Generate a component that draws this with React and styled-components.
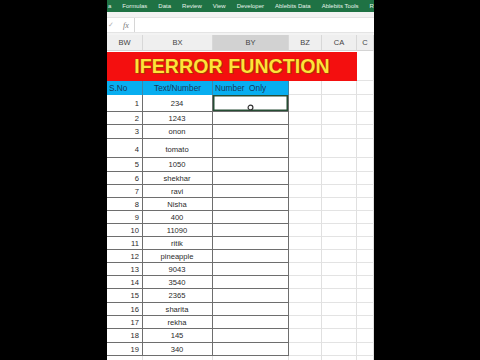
import React from 'react';
import styled, { createGlobalStyle } from 'styled-components';

const Global = createGlobalStyle`
  html, body { margin: 0; padding: 0; background: #000; }
  body { font-family: "Liberation Sans", Arial, sans-serif; }
  * { box-sizing: border-box; }
`;

const Stage = styled.div`
  width: 480px;
  height: 360px;
  background: #000;
  display: flex;
  padding-left: 107px;
`;

const Frame = styled.div`
  width: 267px;
  height: 360px;
  overflow: hidden;
  background: #fff;
  display: flex;
  flex-direction: column;
`;

const Ribbon = styled.div`
  height: 12px;
  flex: none;
  background: #1f7244;
  display: flex;
  align-items: center;
  gap: 11px;
  padding-left: 1px;
  color: #e8f3ec;
  font-size: 6px;
  white-space: nowrap;
`;

const Tab = styled.span`
  flex: none;
`;

const FormulaArea = styled.div`
  height: 23px;
  flex: none;
  background: #f3f3f3;
  padding: 5px 0 2px 0;
  display: flex;
`;

const FormulaBox = styled.div`
  flex: 1;
  background: #fff;
  display: flex;
  align-items: center;
  border-top: 1px solid #e4e4e4;
  border-bottom: 1px solid #e4e4e4;
`;

const Check = styled.span`
  width: 12px;
  padding-left: 1px;
  color: #b0b0b0;
  font-size: 7px;
`;

const Fx = styled.span`
  width: 16px;
  padding-left: 4px;
  color: #777;
  font-family: "Liberation Serif", serif;
  font-style: italic;
  font-size: 8px;
  border-right: 1px solid #d6d6d6;
  height: 100%;
  display: flex;
  align-items: center;
`;

const COLS = '36px 70px 76px 33px 35px 1fr';

const HeaderRow = styled.div`
  height: 16px;
  flex: none;
  display: grid;
  grid-template-columns: ${COLS};
  background: #efefef;
  border-bottom: 1px solid #d4d4d4;
`;

const ColHead = styled.div`
  display: flex;
  align-items: center;
  justify-content: center;
  font-size: 7.5px;
  color: #444;
  border-right: 1px solid #d8d8d8;
  background: ${p => (p.$active ? '#d2d2d2' : 'transparent')};
`;

const Sheet = styled.div`
  position: relative;
  display: flex;
  flex-direction: column;
`;

const Row = styled.div`
  display: grid;
  grid-template-columns: ${COLS};
  height: ${p => p.$h}px;
  flex: none;
`;

const Title = styled.div`
  grid-column: 1 / span 5;
  margin-top: 1px;
  background: #f40f0f;
  display: flex;
  align-items: center;
  justify-content: center;
  color: #ffe23a;
  font-weight: 700;
  font-size: 19.5px;
  letter-spacing: 0.1px;
  text-shadow: 0 0 1px #8a2a00, 1px 1px 0 #b33a00;
`;

const Blank = styled.div`
  border-right: 1px solid ${p => (p.$dark ? '#6e6e6e' : '#e0e0e0')};
  border-bottom: 1px solid ${p => (p.$dark ? '#6e6e6e' : '#e3e3e3')};
`;

const HeadCell = styled.div`
  background: #08aef0;
  display: flex;
  align-items: center;
  justify-content: ${p => p.$align || 'center'};
  padding: 0 2px;
  font-size: 8.3px;
  color: #163a5c;
  border-right: 1px solid #3d87a8;
  white-space: pre;
`;

const Cell = styled.div`
  display: flex;
  align-items: center;
  justify-content: ${p => p.$align || 'center'};
  padding: 0 3px 0 2px;
  font-size: 7.6px;
  color: #2a2a2a;
  border-right: 1px solid #6e6e6e;
  border-bottom: 1px solid #6e6e6e;
  box-shadow: ${p => (p.$selected ? 'inset 0 0 0 1.5px #264d34' : 'none')};
  padding-top: ${p => (p.$low ? '3px' : '0')};
`;

const Cursor = styled.svg`
  position: absolute;
  left: 140px;
  top: 53px;
`;

const rows = [
  [1, '234', 17], [2, '1243', 13], [3, 'onon', 14], [4, 'tomato', 19],
  [5, '1050', 14], [6, 'shekhar', 13], [7, 'ravi', 13], [8, 'Nisha', 13],
  [9, '400', 13], [10, '11090', 13], [11, 'ritik', 13], [12, 'pineapple', 13],
  [13, '9043', 13], [14, '3540', 13], [15, '2365', 14], [16, 'sharita', 13],
  [17, 'rekha', 13], [18, '145', 14], [19, '340', 13],
];

const tabs = ['a', 'Formulas', 'Data', 'Review', 'View', 'Developer', 'Ablebits Data', 'Ablebits Tools', 'R'];

export default function App() {
  return (
    <>
      <Global />
      <Stage>
        <Frame>
          <Ribbon>
            {tabs.map(t => <Tab key={t}>{t}</Tab>)}
          </Ribbon>
          <FormulaArea>
            <FormulaBox>
              <Check>✓</Check>
              <Fx>fx</Fx>
            </FormulaBox>
          </FormulaArea>
          <HeaderRow>
            <ColHead>BW</ColHead>
            <ColHead>BX</ColHead>
            <ColHead $active>BY</ColHead>
            <ColHead>BZ</ColHead>
            <ColHead>CA</ColHead>
            <ColHead>C</ColHead>
          </HeaderRow>
          <Sheet>
            <Row $h={30}>
              <Title>IFERROR FUNCTION</Title>
              <Blank />
            </Row>
            <Row $h={14}>
              <HeadCell $align="flex-start">S.No</HeadCell>
              <HeadCell>Text/Number</HeadCell>
              <HeadCell $align="flex-start">{'Number  Only'}</HeadCell>
              <Blank />
              <Blank />
              <Blank />
            </Row>
            {rows.map(([n, v, h]) => (
              <Row key={n} $h={h}>
                <Cell $align="flex-end" $low={n === 4}>{n}</Cell>
                <Cell $low={n === 4}>{v}</Cell>
                <Cell $selected={n === 1} />
                <Blank />
                <Blank />
                <Blank />
              </Row>
            ))}
            <Row $h={14}>
              <Blank />
              <Blank />
              <Blank />
              <Blank />
              <Blank />
              <Blank />
            </Row>
            <Cursor width="7" height="7" viewBox="0 0 7 7">
              <circle cx="3.5" cy="3.5" r="2.4" fill="#fff" stroke="#333" strokeWidth="1.2" />
            </Cursor>
          </Sheet>
        </Frame>
      </Stage>
    </>
  );
}
